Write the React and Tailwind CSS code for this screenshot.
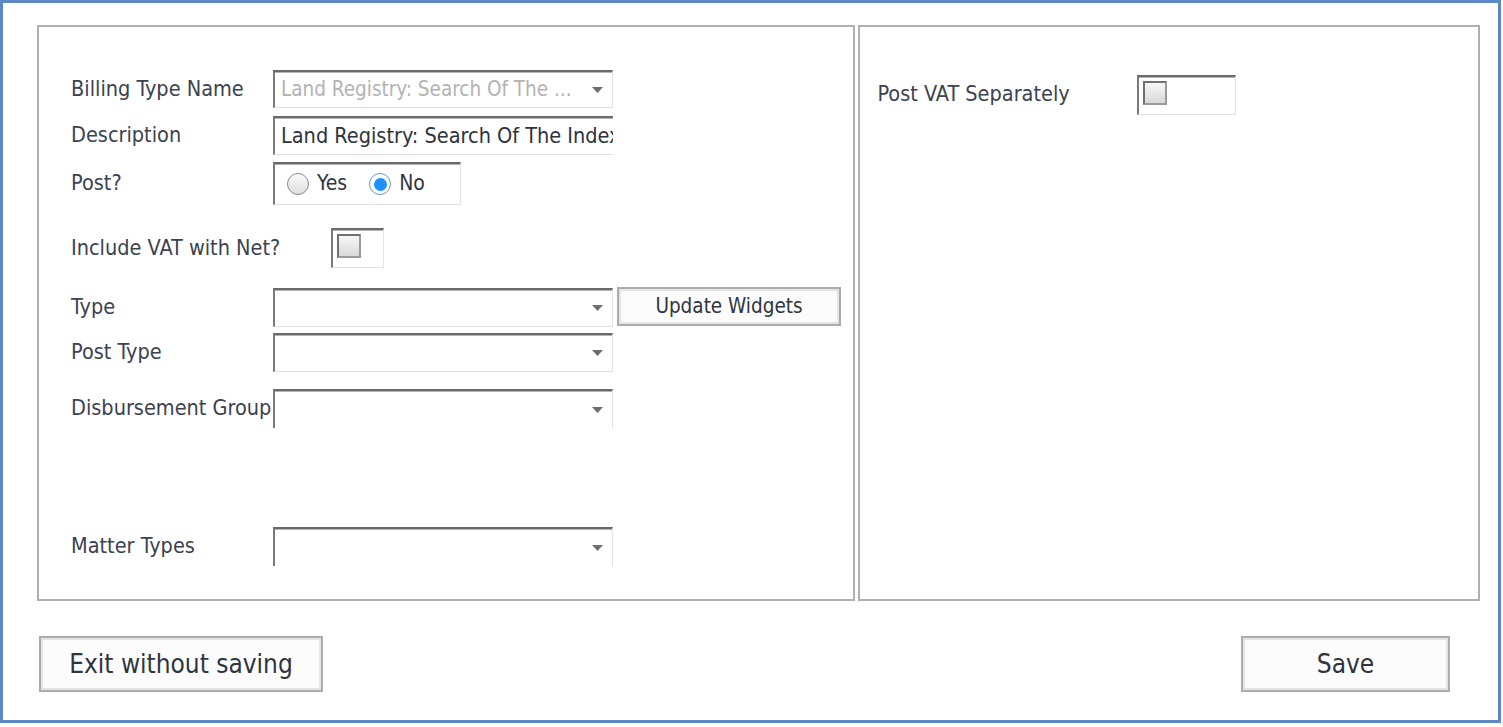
import React from 'react';

const font = "font-['DejaVu_Sans_Condensed','DejaVu_Sans',sans-serif]";
const sunken = 'bg-white border-t-2 border-l-2 border-r border-b border-t-[#6a6a6a] border-l-[#7a7a7a] border-r-[#e2e2e2] border-b-[#e2e2e2] shadow-[inset_0_1px_0_#b5b5b5]';
const btn = 'bg-[#fcfcfc] border-2 border-[#acacac] shadow-[inset_0_0_0_2px_#e4e4e4] text-[#2f3540]';

const Arrow = () => (
  <svg width="11" height="6" viewBox="0 0 11 6" className="shrink-0">
    <path d="M0 0h11L5.5 6z" fill="#6e6e6e" />
  </svg>
);

const Label = ({ children }) => (
  <div className="w-[202px] shrink-0 text-[21.5px] text-[#3b4250] whitespace-nowrap">{children}</div>
);

const Combo = ({ text, dim, cut, h = 'h-[39px]' }) => (
  <div className={`${sunken} ${cut ? 'border-b-0' : ''} w-[340px] ${h} flex items-center pl-[6px] pr-[9px] gap-2`}>
    <span className={`flex-1 truncate text-[20.5px] ${dim ? 'text-[#b3b3b3]' : 'text-[#2c3340]'}`}>{text}</span>
    <Arrow />
  </div>
);

const Check = ({ w }) => (
  <div className={`${sunken} ${w} h-[40px] pl-[4px] pt-[4px]`}>
    <div className="w-[24px] h-[24px] border-2 border-[#707070] border-r-[#9a9a9a] border-b-[#9a9a9a] bg-gradient-to-b from-[#f7f7f7] to-[#d9d9d9]" />
  </div>
);

const Radio = ({ on, children }) => (
  <label className="flex items-center gap-[8px]">
    <span className={`w-[22px] h-[22px] rounded-full border flex items-center justify-center ${on ? 'border-[#5a9bd6] bg-white' : 'border-[#8a8a8a] bg-gradient-to-b from-[#fafafa] to-[#dedede]'}`}>
      {on && <span className="w-[13px] h-[13px] rounded-full bg-[#1e90ff]" />}
    </span>
    <span className="text-[21px] text-[#2f3540]">{children}</span>
  </label>
);

export default function App() {
  return (
    <div className={`${font} bg-white w-[1503px] h-[727px]`}>
      <div className="w-[1501px] h-[723px] border-[3px] border-[#5b87c5] pt-[22px] pl-[34px] pr-[18px] flex flex-col">
        <div className="flex gap-[3px] h-[576px]">
          {/* left panel */}
          <div className="w-[819px] h-full border-2 border-[#b0b0b0] pl-[32px] pt-[43px] flex flex-col">
            <div className="flex items-center h-[38px]">
              <Label>Billing Type Name</Label>
              <Combo text="Land Registry: Search Of The ..." dim h="h-[38px]" />
            </div>
            <div className="flex items-center h-[39px] mt-[8px]">
              <Label>Description</Label>
              <div className={`${sunken} border-r-0 w-[340px] h-[39px] flex items-center pl-[6px] overflow-hidden`}>
                <span className="text-[21.5px] text-[#2c3340] whitespace-nowrap">Land Registry: Search Of The Index</span>
              </div>
            </div>
            <div className="flex items-center h-[43px] mt-[7px]">
              <Label>Post?</Label>
              <div className={`${sunken} w-[188px] h-[43px] flex items-center pl-[12px] gap-[22px]`}>
                <Radio>Yes</Radio>
                <Radio on>No</Radio>
              </div>
            </div>
            <div className="flex items-center h-[40px] mt-[23px]">
              <div className="w-[260px] shrink-0 text-[21.5px] text-[#3b4250] whitespace-nowrap">Include VAT with Net?</div>
              <Check w="w-[53px]" />
            </div>
            <div className="flex items-center h-[39px] mt-[20px]">
              <Label>Type</Label>
              <Combo />
              <button className={`${btn} ml-[4px] w-[224px] h-[39px] text-[20.5px] -mt-[2px]`}>Update Widgets</button>
            </div>
            <div className="flex items-center h-[39px] mt-[6px]">
              <Label>Post Type</Label>
              <Combo />
            </div>
            <div className="flex items-center h-[39px] mt-[17px]">
              <Label>Disbursement Group</Label>
              <Combo cut />
            </div>
            <div className="flex items-center h-[39px] mt-[99px]">
              <Label>Matter Types</Label>
              <Combo cut />
            </div>
          </div>

          {/* right panel */}
          <div className="w-[622px] h-full border-2 border-[#b0b0b0] pl-[17px] pt-[47px]">
            <div className="flex items-center h-[41px]">
              <div className="w-[260px] shrink-0 text-[21.5px] text-[#3b4250] whitespace-nowrap">Post VAT Separately</div>
              <Check w="w-[99px]" />
            </div>
          </div>
        </div>

        <div className="flex justify-between mt-[35px] pl-[2px] pr-[30px]">
          <button className={`${btn} w-[284px] h-[56px] text-[26px]`}>Exit without saving</button>
          <button className={`${btn} w-[209px] h-[56px] text-[26px]`}>Save</button>
        </div>
      </div>
    </div>
  );
}
